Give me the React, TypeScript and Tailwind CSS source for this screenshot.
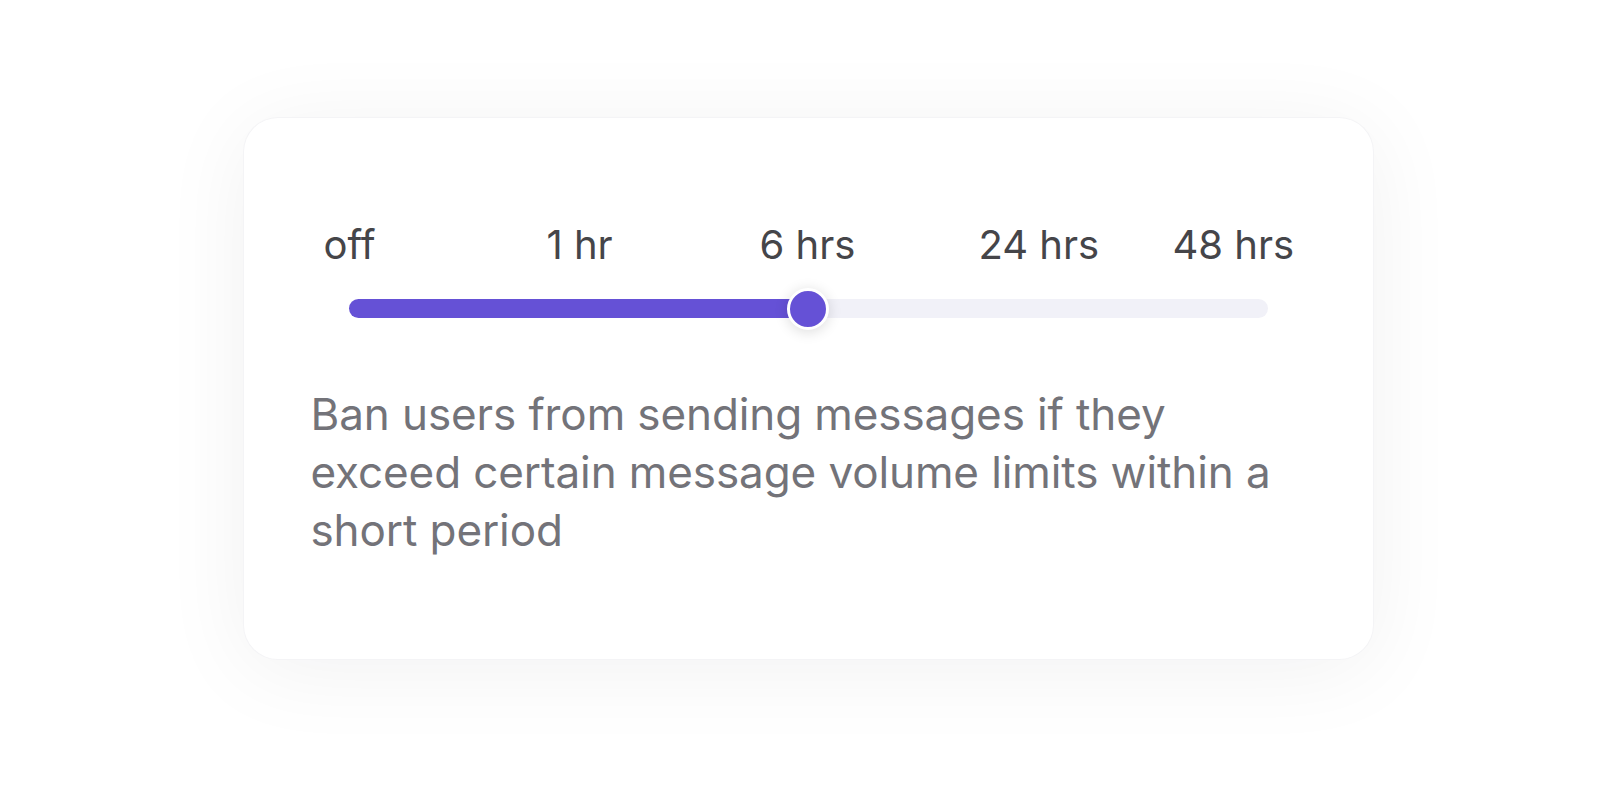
import React, { useState } from 'react';

const STEPS = [
  { label: 'off', left: 289 },
  { label: '1 hr', left: 519 },
  { label: '6 hrs', left: 747 },
  { label: '24 hrs', left: 978 },
  { label: '48 hrs', left: 1172 },
];

const App: React.FC = () => {
  const [value] = useState(2);
  // thumb sits under the selected label's centre, relative to the track start
  const trackStart = 348;
  const trackWidth = 919;
  const thumbX = STEPS[value].left + 60 - trackStart;

  return (
    <div
      className="min-h-screen w-full bg-white pt-[118px]"
      style={{ fontFamily: 'Inter, "Noto Sans", sans-serif' }}
    >
      <div className="mx-auto flex h-[541px] w-[1129px] flex-col rounded-[34px] bg-white px-[67px] pt-[103px] shadow-[0_10px_90px_rgba(20,20,40,0.06)] ring-1 ring-[#f4f4f6]">
        {/* Tick labels */}
        <div className="-ml-[21px] flex">
          {STEPS.map((s, i) => (
            <span
              key={s.label}
              className="w-[120px] shrink-0 whitespace-nowrap text-center text-[40px] leading-[48px] text-[#454549]"
              style={{ marginLeft: i === 0 ? 0 : s.left - STEPS[i - 1].left - 120 }}
            >
              {s.label}
            </span>
          ))}
        </div>

        {/* Slider track */}
        <div className="relative ml-[38px] mt-[30px] h-[19px] w-[919px] rounded-full bg-[#f1f1f8]">
          <div
            className="h-full rounded-full bg-[#6551d6]"
            style={{ width: thumbX }}
          />
          <div
            className="absolute top-1/2 h-[42px] w-[42px] -translate-x-1/2 -translate-y-1/2 rounded-full border-[3px] border-white bg-[#6551d6] shadow-[0_2px_14px_rgba(0,0,0,0.14)]"
            style={{ left: Math.min(thumbX, trackWidth) }}
          />
        </div>

        <p className="mt-[67px] text-[44px] leading-[58px] tracking-[-0.1px] text-[#737379]">
          Ban users from sending messages if they exceed certain message volume limits within a short period
        </p>
      </div>
    </div>
  );
};

export default App;
